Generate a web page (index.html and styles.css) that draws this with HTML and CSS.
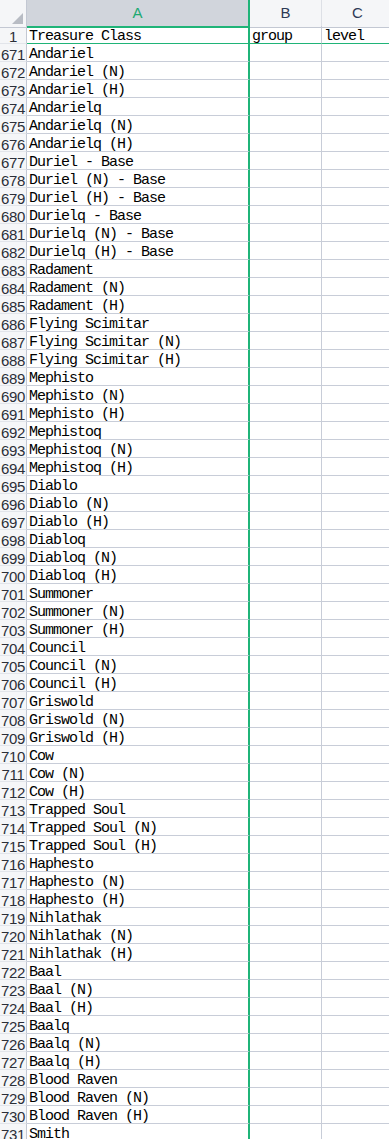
FILE: index.html
```html
<!DOCTYPE html>
<html>
<head>
<meta charset="utf-8">
<link rel="stylesheet" href="styles.css">
</head>
<body>
<div class="sheet">
  <div class="row head">
    <div class="rh corner"><span class="tri"></span></div>
    <div class="ch sel">A</div>
    <div class="ch">B</div>
    <div class="ch">C</div>
  </div>
  <div class="row first"><div class="rh">1</div><div class="c a">Treasure Class</div><div class="c">group</div><div class="c">level</div></div>
  <div class="row"><div class="rh">671</div><div class="c a">Andariel</div><div class="c"></div><div class="c"></div></div>
  <div class="row"><div class="rh">672</div><div class="c a">Andariel (N)</div><div class="c"></div><div class="c"></div></div>
  <div class="row"><div class="rh">673</div><div class="c a">Andariel (H)</div><div class="c"></div><div class="c"></div></div>
  <div class="row"><div class="rh">674</div><div class="c a">Andarielq</div><div class="c"></div><div class="c"></div></div>
  <div class="row"><div class="rh">675</div><div class="c a">Andarielq (N)</div><div class="c"></div><div class="c"></div></div>
  <div class="row"><div class="rh">676</div><div class="c a">Andarielq (H)</div><div class="c"></div><div class="c"></div></div>
  <div class="row"><div class="rh">677</div><div class="c a">Duriel - Base</div><div class="c"></div><div class="c"></div></div>
  <div class="row"><div class="rh">678</div><div class="c a">Duriel (N) - Base</div><div class="c"></div><div class="c"></div></div>
  <div class="row"><div class="rh">679</div><div class="c a">Duriel (H) - Base</div><div class="c"></div><div class="c"></div></div>
  <div class="row"><div class="rh">680</div><div class="c a">Durielq - Base</div><div class="c"></div><div class="c"></div></div>
  <div class="row"><div class="rh">681</div><div class="c a">Durielq (N) - Base</div><div class="c"></div><div class="c"></div></div>
  <div class="row"><div class="rh">682</div><div class="c a">Durielq (H) - Base</div><div class="c"></div><div class="c"></div></div>
  <div class="row"><div class="rh">683</div><div class="c a">Radament</div><div class="c"></div><div class="c"></div></div>
  <div class="row"><div class="rh">684</div><div class="c a">Radament (N)</div><div class="c"></div><div class="c"></div></div>
  <div class="row"><div class="rh">685</div><div class="c a">Radament (H)</div><div class="c"></div><div class="c"></div></div>
  <div class="row"><div class="rh">686</div><div class="c a">Flying Scimitar</div><div class="c"></div><div class="c"></div></div>
  <div class="row"><div class="rh">687</div><div class="c a">Flying Scimitar (N)</div><div class="c"></div><div class="c"></div></div>
  <div class="row"><div class="rh">688</div><div class="c a">Flying Scimitar (H)</div><div class="c"></div><div class="c"></div></div>
  <div class="row"><div class="rh">689</div><div class="c a">Mephisto</div><div class="c"></div><div class="c"></div></div>
  <div class="row"><div class="rh">690</div><div class="c a">Mephisto (N)</div><div class="c"></div><div class="c"></div></div>
  <div class="row"><div class="rh">691</div><div class="c a">Mephisto (H)</div><div class="c"></div><div class="c"></div></div>
  <div class="row"><div class="rh">692</div><div class="c a">Mephistoq</div><div class="c"></div><div class="c"></div></div>
  <div class="row"><div class="rh">693</div><div class="c a">Mephistoq (N)</div><div class="c"></div><div class="c"></div></div>
  <div class="row"><div class="rh">694</div><div class="c a">Mephistoq (H)</div><div class="c"></div><div class="c"></div></div>
  <div class="row"><div class="rh">695</div><div class="c a">Diablo</div><div class="c"></div><div class="c"></div></div>
  <div class="row"><div class="rh">696</div><div class="c a">Diablo (N)</div><div class="c"></div><div class="c"></div></div>
  <div class="row"><div class="rh">697</div><div class="c a">Diablo (H)</div><div class="c"></div><div class="c"></div></div>
  <div class="row"><div class="rh">698</div><div class="c a">Diabloq</div><div class="c"></div><div class="c"></div></div>
  <div class="row"><div class="rh">699</div><div class="c a">Diabloq (N)</div><div class="c"></div><div class="c"></div></div>
  <div class="row"><div class="rh">700</div><div class="c a">Diabloq (H)</div><div class="c"></div><div class="c"></div></div>
  <div class="row"><div class="rh">701</div><div class="c a">Summoner</div><div class="c"></div><div class="c"></div></div>
  <div class="row"><div class="rh">702</div><div class="c a">Summoner (N)</div><div class="c"></div><div class="c"></div></div>
  <div class="row"><div class="rh">703</div><div class="c a">Summoner (H)</div><div class="c"></div><div class="c"></div></div>
  <div class="row"><div class="rh">704</div><div class="c a">Council</div><div class="c"></div><div class="c"></div></div>
  <div class="row"><div class="rh">705</div><div class="c a">Council (N)</div><div class="c"></div><div class="c"></div></div>
  <div class="row"><div class="rh">706</div><div class="c a">Council (H)</div><div class="c"></div><div class="c"></div></div>
  <div class="row"><div class="rh">707</div><div class="c a">Griswold</div><div class="c"></div><div class="c"></div></div>
  <div class="row"><div class="rh">708</div><div class="c a">Griswold (N)</div><div class="c"></div><div class="c"></div></div>
  <div class="row"><div class="rh">709</div><div class="c a">Griswold (H)</div><div class="c"></div><div class="c"></div></div>
  <div class="row"><div class="rh">710</div><div class="c a">Cow</div><div class="c"></div><div class="c"></div></div>
  <div class="row"><div class="rh">711</div><div class="c a">Cow (N)</div><div class="c"></div><div class="c"></div></div>
  <div class="row"><div class="rh">712</div><div class="c a">Cow (H)</div><div class="c"></div><div class="c"></div></div>
  <div class="row"><div class="rh">713</div><div class="c a">Trapped Soul</div><div class="c"></div><div class="c"></div></div>
  <div class="row"><div class="rh">714</div><div class="c a">Trapped Soul (N)</div><div class="c"></div><div class="c"></div></div>
  <div class="row"><div class="rh">715</div><div class="c a">Trapped Soul (H)</div><div class="c"></div><div class="c"></div></div>
  <div class="row"><div class="rh">716</div><div class="c a">Haphesto</div><div class="c"></div><div class="c"></div></div>
  <div class="row"><div class="rh">717</div><div class="c a">Haphesto (N)</div><div class="c"></div><div class="c"></div></div>
  <div class="row"><div class="rh">718</div><div class="c a">Haphesto (H)</div><div class="c"></div><div class="c"></div></div>
  <div class="row"><div class="rh">719</div><div class="c a">Nihlathak</div><div class="c"></div><div class="c"></div></div>
  <div class="row"><div class="rh">720</div><div class="c a">Nihlathak (N)</div><div class="c"></div><div class="c"></div></div>
  <div class="row"><div class="rh">721</div><div class="c a">Nihlathak (H)</div><div class="c"></div><div class="c"></div></div>
  <div class="row"><div class="rh">722</div><div class="c a">Baal</div><div class="c"></div><div class="c"></div></div>
  <div class="row"><div class="rh">723</div><div class="c a">Baal (N)</div><div class="c"></div><div class="c"></div></div>
  <div class="row"><div class="rh">724</div><div class="c a">Baal (H)</div><div class="c"></div><div class="c"></div></div>
  <div class="row"><div class="rh">725</div><div class="c a">Baalq</div><div class="c"></div><div class="c"></div></div>
  <div class="row"><div class="rh">726</div><div class="c a">Baalq (N)</div><div class="c"></div><div class="c"></div></div>
  <div class="row"><div class="rh">727</div><div class="c a">Baalq (H)</div><div class="c"></div><div class="c"></div></div>
  <div class="row"><div class="rh">728</div><div class="c a">Blood Raven</div><div class="c"></div><div class="c"></div></div>
  <div class="row"><div class="rh">729</div><div class="c a">Blood Raven (N)</div><div class="c"></div><div class="c"></div></div>
  <div class="row"><div class="rh">730</div><div class="c a">Blood Raven (H)</div><div class="c"></div><div class="c"></div></div>
  <div class="row"><div class="rh">731</div><div class="c a">Smith</div><div class="c"></div><div class="c"></div></div>
</div>
</body>
</html>
```
FILE: styles.css
```css
html, body {
  margin: 0;
  padding: 0;
  background: #ffffff;
  overflow: hidden;
}
.sheet {
  width: 389px;
  height: 1139px;
  overflow: hidden;
}
.row {
  display: grid;
  grid-template-columns: 27px 223px 72px 72px;
  height: 18px;
}
.row.head {
  height: 26px;
}
.rh {
  box-sizing: border-box;
  background: #f5f6f8;
  border-right: 1px solid #c3c8d3;
  border-bottom: 1px solid #e2e5ea;
  font-family: "Liberation Sans", Arial, sans-serif;
  font-size: 15px;
  line-height: 22px;
  color: #2b2f38;
  text-align: center;
  white-space: nowrap;
  overflow: hidden;
  letter-spacing: -0.3px;
}
.corner {
  position: relative;
  background: #f5f6f8;
  border-bottom: 1px solid #c3c8d3;
  border-right: 1px solid #c3c8d3;
}
.tri {
  position: absolute;
  right: 3px;
  bottom: 3px;
  width: 0;
  height: 0;
  border-left: 11px solid transparent;
  border-bottom: 11px solid #b8bcc4;
}
.ch {
  box-sizing: border-box;
  background: #f5f6f8;
  border-right: 1px solid #dde0e6;
  border-bottom: 1px solid #c3c8d3;
  font-family: "Liberation Sans", Arial, sans-serif;
  font-size: 15px;
  line-height: 26px;
  color: #2d3a55;
  text-align: center;
}
.ch.sel {
  background: #d1d5dc;
  color: #1da972;
  border-bottom: 2px solid #1fb478;
  border-right: 2px solid #1fb478;
}
.c {
  box-sizing: border-box;
  border-right: 1px solid #c8cdd8;
  border-bottom: 1px solid #c8cdd8;
  font-family: "Liberation Mono", "Courier New", monospace;
  font-size: 15px;
  letter-spacing: -1px;
  line-height: 22px;
  color: #000;
  padding-left: 2px;
  white-space: nowrap;
  overflow: hidden;
}
.c.a {
  border-right: 2px solid #1fb478;
}
.first .c {
  border-bottom: 1px solid #1fb478;
}
```
